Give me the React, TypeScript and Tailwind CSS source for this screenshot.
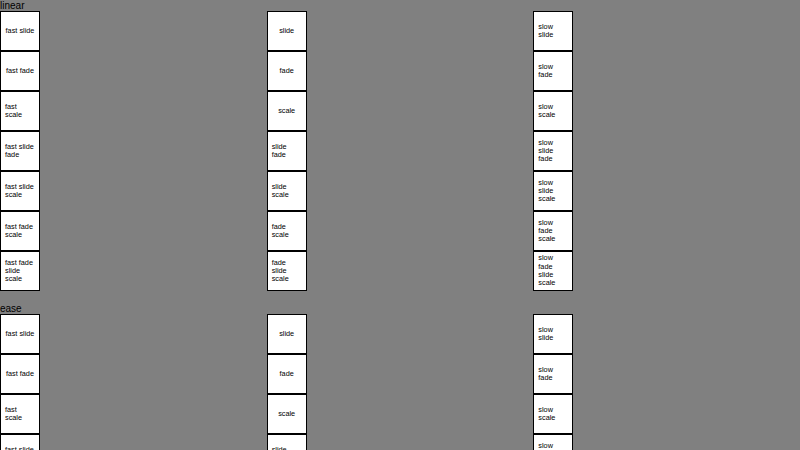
const timings = ["linear", "ease", "ease-in", "ease-out"];

const combos = ["slide", "fade", "scale", "slide fade", "slide scale", "fade scale", "fade slide scale"];
const speeds = ["fast", "", "slow"];

function Box({ label }: { label: string }) {
  return (
    <div className="flex h-[40px] w-[40px] items-center justify-center border border-black bg-white px-[4px] text-[7.3px] leading-[8.3px] text-black">
      {label}
    </div>
  );
}

export default function App() {
  return (
    <div className="min-h-[450px] bg-[#808080] font-['Liberation_Sans',Arial,sans-serif] text-black">
      {timings.map((t) => (
        <section key={t} className="mb-[12px]">
          <h2 className="text-[10px] leading-[11px]">{t}</h2>
          <div className="grid grid-cols-3">
            {speeds.map((s) => (
              <div key={s || "mid"} className="flex flex-col">
                {combos.map((c) => (
                  <Box key={c} label={s ? `${s} ${c}` : c} />
                ))}
              </div>
            ))}
          </div>
        </section>
      ))}
    </div>
  );
}
